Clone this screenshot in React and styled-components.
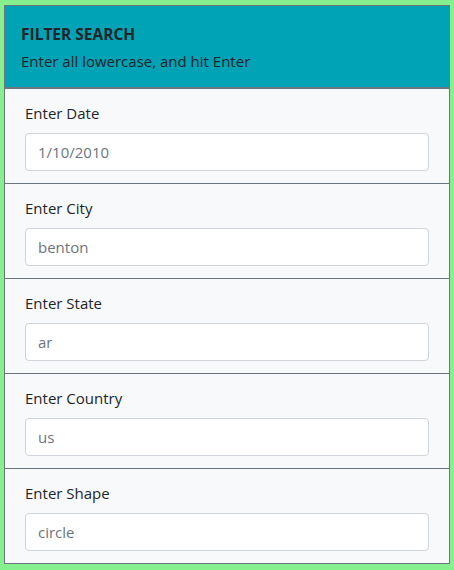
import React from "react";
import styled, { createGlobalStyle } from "styled-components";

const Global = createGlobalStyle`
  html, body { margin: 0; padding: 0; }
  body {
    background: #86f08f;
    font-family: "Open Sans", "Noto Sans", sans-serif;
    color: #212529;
  }
  * { box-sizing: border-box; }
`;

const Page = styled.div`
  padding: 5px 4px 7px 4px;
`;

const Card = styled.div`
  width: 446px;
  border: 1px solid #6c757d;
  background: #f8f9fa;
  display: flex;
  flex-direction: column;
`;

const Header = styled.div`
  background: #00a2b6;
  padding: 18px 16px 14px 16px;
  border-bottom: 2px solid #6c757d;
  display: flex;
  flex-direction: column;
  gap: 5px;
`;

const Title = styled.div`
  font-size: 15.5px;
  font-weight: 700;
  line-height: 20px;
  color: #1f2428;
`;

const Subtitle = styled.div`
  font-size: 15px;
  line-height: 24px;
  color: #1f2428;
`;

const Row = styled.div`
  padding: 12px 20px;
  display: flex;
  flex-direction: column;
  gap: 8px;
  border-top: ${(p) => (p.$first ? "none" : "1px solid #6c757d")};
`;

const Label = styled.label`
  font-size: 15px;
  line-height: 24px;
  color: #212529;
`;

const Input = styled.input`
  height: 38px;
  width: 100%;
  border: 1px solid #ced4da;
  border-radius: 4px;
  background: #fff;
  padding: 6px 12px;
  font-family: inherit;
  font-size: 15px;
  color: #6c757d;
  outline: none;
`;

const fields = [
  { label: "Enter Date", value: "1/10/2010" },
  { label: "Enter City", value: "benton" },
  { label: "Enter State", value: "ar" },
  { label: "Enter Country", value: "us" },
  { label: "Enter Shape", value: "circle" },
];

export default function App() {
  return (
    <Page>
      <Global />
      <Card>
        <Header>
          <Title>FILTER SEARCH</Title>
          <Subtitle>Enter all lowercase, and hit Enter</Subtitle>
        </Header>
        {fields.map((f, i) => (
          <Row key={f.label} $first={i === 0}>
            <Label>{f.label}</Label>
            <Input defaultValue={f.value} readOnly />
          </Row>
        ))}
      </Card>
    </Page>
  );
}
